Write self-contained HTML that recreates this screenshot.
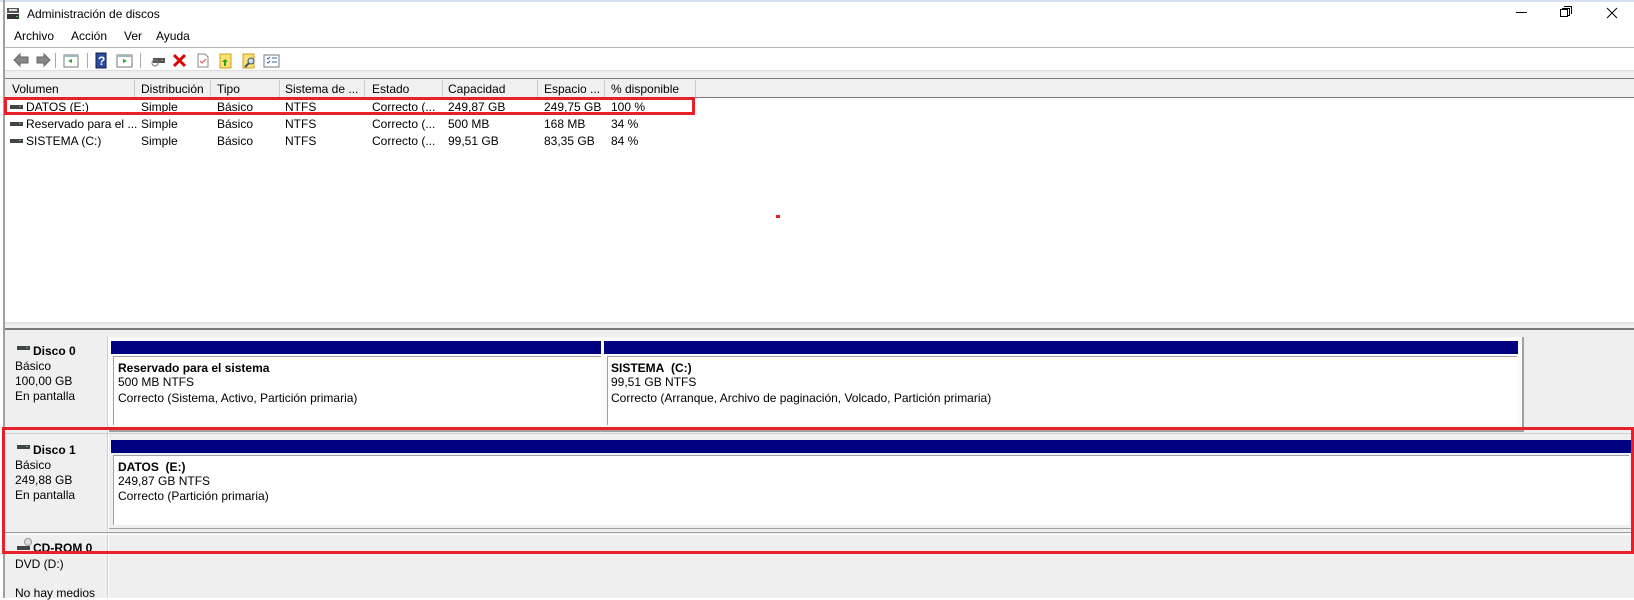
<!DOCTYPE html>
<html><head><meta charset="utf-8"><style>
*{margin:0;padding:0;box-sizing:border-box}
body{width:1634px;height:598px;overflow:hidden;background:#fff;position:relative;font-family:"Liberation Sans",sans-serif;font-size:12px;color:#000}
.a{position:absolute;white-space:nowrap}
.t{line-height:14px}
b{font-weight:bold}
</style></head><body>
<div class="a" style="left:0;top:0;width:1634px;height:2px;background:#d6e0f2"></div>
<div class="a" style="left:3px;top:0;width:2px;height:598px;background:#a0a0a0"></div>
<!-- title -->
<svg class="a" style="left:7px;top:8px" width="12" height="12"><rect x="0" y="0" width="12" height="5" fill="#555"/><rect x="2" y="1" width="8" height="2" fill="#ddd"/><rect x="0" y="6" width="12" height="5" fill="#333"/><rect x="9" y="8" width="2" height="1" fill="#4c4"/></svg>
<div class="a t" style="left:27px;top:7px">Administración de discos</div>
<div class="a" style="left:1516px;top:12px;width:11px;height:1px;background:#000"></div>
<div class="a" style="left:1562px;top:8px;width:8px;height:8px;border:1px solid #000;background:#fff"></div>
<div class="a" style="left:1564px;top:6px;width:8px;height:8px;border-top:1px solid #000;border-right:1px solid #000"></div>
<div class="a" style="left:1560px;top:9px;width:8px;height:8px;border:1px solid #000;background:#fff"></div>
<svg class="a" style="left:1606px;top:7px" width="12" height="12"><path d="M1 1L11 11M11 1L1 11" stroke="#000" stroke-width="1"/></svg>
<!-- menu -->
<div class="a t" style="left:14px;top:29px">Archivo</div>
<div class="a t" style="left:71px;top:29px">Acción</div>
<div class="a t" style="left:124px;top:29px">Ver</div>
<div class="a t" style="left:156px;top:29px">Ayuda</div>
<div class="a" style="left:5px;top:47px;width:1629px;height:1px;background:#b4b4b4"></div>
<!-- toolbar -->
<svg class="a" style="left:5px;top:50px" width="290" height="20">
<path d="M9 10L15 4V7H23V13H15V16Z" fill="#888" stroke="#666"/>
<path d="M45 10L39 4V7H32V13H39V16Z" fill="#888" stroke="#666"/>
<rect x="50" y="3" width="1" height="15" fill="#aaa"/>
<rect x="59" y="5" width="14" height="12" fill="#fff" stroke="#777"/><rect x="59" y="5" width="14" height="2" fill="#9bb"/><path d="M67 9L63 11L67 13Z" fill="#2a2"/>
<rect x="82" y="3" width="1" height="15" fill="#aaa"/>
<rect x="91" y="3" width="10" height="15" fill="#2a4aa8" stroke="#123"/><text x="93" y="15" fill="#fff" font-size="12" font-weight="bold">?</text>
<rect x="112" y="5" width="15" height="12" fill="#fff" stroke="#777"/><rect x="112" y="5" width="15" height="2" fill="#9bb"/><path d="M118 9L122 11L118 13Z" fill="#2a2"/>
<rect x="135" y="3" width="1" height="15" fill="#aaa"/>
<rect x="148" y="8" width="12" height="5" fill="#555"/><circle cx="150" cy="13" r="3" fill="none" stroke="#777"/><rect x="156" y="10" width="2" height="1" fill="#4c4"/>
<path d="M169 5L180 16M180 5L169 16" stroke="#d00" stroke-width="3"/>
<path d="M193 4H200L203 7V17H193Z" fill="#fff" stroke="#888"/><path d="M195 11L197 13L201 9" stroke="#e44" fill="none"/>
<rect x="215" y="4" width="11" height="14" fill="#ffe070" stroke="#c9a020"/><path d="M220 9L223 12H221V16H219V12H217Z" fill="#2a2"/>
<rect x="238" y="4" width="11" height="14" fill="#ffe070" stroke="#c9a020"/><circle cx="246" cy="11" r="3" fill="#cde" stroke="#456"/><path d="M244 13L240 17" stroke="#456" stroke-width="2"/>
<rect x="259" y="5" width="15" height="12" fill="#fff" stroke="#778"/><path d="M262 8L263 9L265 7M262 12L263 13L265 11M267 8H272M267 12H272" stroke="#36a" fill="none"/>
</svg>
<div class="a" style="left:5px;top:70px;width:1629px;height:1px;background:#dcdcdc"></div>
<div class="a" style="left:5px;top:71px;width:1629px;height:7px;background:#f0f0f0"></div>
<!-- header -->
<div class="a" style="left:5px;top:78px;width:1629px;height:20px;background:#f0f0f0;border-top:1px solid #7a7a7a;border-bottom:1px solid #7a7a7a"></div>
<div class="a" style="left:134px;top:80px;width:1px;height:17px;background:#ccc"></div>
<div class="a" style="left:210px;top:80px;width:1px;height:17px;background:#ccc"></div>
<div class="a" style="left:279px;top:80px;width:1px;height:17px;background:#ccc"></div>
<div class="a" style="left:364px;top:80px;width:1px;height:17px;background:#ccc"></div>
<div class="a" style="left:442px;top:80px;width:1px;height:17px;background:#ccc"></div>
<div class="a" style="left:537px;top:80px;width:1px;height:17px;background:#ccc"></div>
<div class="a" style="left:604px;top:80px;width:1px;height:17px;background:#ccc"></div>
<div class="a" style="left:695px;top:80px;width:1px;height:17px;background:#ccc"></div>
<div class="a t" style="left:12px;top:82px">Volumen</div>
<div class="a t" style="left:141px;top:82px">Distribución</div>
<div class="a t" style="left:217px;top:82px">Tipo</div>
<div class="a t" style="left:285px;top:82px">Sistema de ...</div>
<div class="a t" style="left:372px;top:82px">Estado</div>
<div class="a t" style="left:448px;top:82px">Capacidad</div>
<div class="a t" style="left:544px;top:82px">Espacio ...</div>
<div class="a t" style="left:611px;top:82px">% disponible</div>
<!-- rows -->
<div class="a" style="left:10px;top:105px;width:13px;height:4px;background:#444"></div><div class="a" style="left:19px;top:106px;width:2px;height:1px;background:#4c4"></div>
<div class="a" style="left:10px;top:122px;width:13px;height:4px;background:#444"></div><div class="a" style="left:19px;top:123px;width:2px;height:1px;background:#4c4"></div>
<div class="a" style="left:10px;top:139px;width:13px;height:4px;background:#444"></div><div class="a" style="left:19px;top:140px;width:2px;height:1px;background:#4c4"></div>
<div class="a t" style="left:26px;top:100px">DATOS (E:)</div>
<div class="a t" style="left:26px;top:117px">Reservado para el ...</div>
<div class="a t" style="left:26px;top:134px">SISTEMA (C:)</div>
<div class="a t" style="left:141px;top:100px">Simple</div><div class="a t" style="left:141px;top:117px">Simple</div><div class="a t" style="left:141px;top:134px">Simple</div>
<div class="a t" style="left:217px;top:100px">Básico</div><div class="a t" style="left:217px;top:117px">Básico</div><div class="a t" style="left:217px;top:134px">Básico</div>
<div class="a t" style="left:285px;top:100px">NTFS</div><div class="a t" style="left:285px;top:117px">NTFS</div><div class="a t" style="left:285px;top:134px">NTFS</div>
<div class="a t" style="left:372px;top:100px">Correcto (...</div><div class="a t" style="left:372px;top:117px">Correcto (...</div><div class="a t" style="left:372px;top:134px">Correcto (...</div>
<div class="a t" style="left:448px;top:100px">249,87 GB</div><div class="a t" style="left:448px;top:117px">500 MB</div><div class="a t" style="left:448px;top:134px">99,51 GB</div>
<div class="a t" style="left:544px;top:100px">249,75 GB</div><div class="a t" style="left:544px;top:117px">168 MB</div><div class="a t" style="left:544px;top:134px">83,35 GB</div>
<div class="a t" style="left:611px;top:100px">100 %</div><div class="a t" style="left:611px;top:117px">34 %</div><div class="a t" style="left:611px;top:134px">84 %</div>
<div class="a" style="left:4px;top:97px;width:691px;height:18px;border:3px solid #e8202a"></div>
<div class="a" style="left:776px;top:215px;width:4px;height:3px;background:#e8202a"></div>
<!-- lower pane -->
<div class="a" style="left:5px;top:322px;width:1629px;height:276px;background:#efefef"></div>
<div class="a" style="left:5px;top:322px;width:1629px;height:2px;background:#e3e3e3"></div>
<div class="a" style="left:5px;top:328px;width:1629px;height:2px;background:#7a7a7a"></div>
<div class="a" style="left:108px;top:336px;width:1px;height:262px;background:#fff"></div>
<div class="a" style="left:107px;top:336px;width:1px;height:262px;background:#cfcfcf"></div>
<!-- disk 0 -->
<div class="a" style="left:17px;top:346px;width:13px;height:4px;background:#444"></div><div class="a" style="left:26px;top:347px;width:2px;height:1px;background:#4c4"></div>
<div class="a t" style="left:33px;top:344px"><b>Disco 0</b></div>
<div class="a t" style="left:15px;top:359px">Básico</div>
<div class="a t" style="left:15px;top:374px">100,00 GB</div>
<div class="a t" style="left:15px;top:389px">En pantalla</div>
<div class="a" style="left:109px;top:337px;width:1415px;height:95px;border-right:2px solid #a0a0a0;border-bottom:2px solid #a0a0a0;background:#fafafa"></div>
<div class="a" style="left:111px;top:341px;width:490px;height:13px;background:#000080"></div>
<div class="a" style="left:604px;top:341px;width:914px;height:13px;background:#000080"></div>
<div class="a" style="left:113px;top:356px;width:488px;height:69px;background:#fff;border-left:1px solid #a0a0a0;border-top:1px solid #a0a0a0"></div>
<div class="a" style="left:607px;top:356px;width:910px;height:69px;background:#fff;border-left:1px solid #a0a0a0;border-top:1px solid #a0a0a0"></div>
<div class="a t" style="left:118px;top:361px"><b>Reservado para el sistema</b></div>
<div class="a t" style="left:118px;top:375px">500 MB NTFS</div>
<div class="a t" style="left:118px;top:391px">Correcto (Sistema, Activo, Partición primaria)</div>
<div class="a t" style="left:611px;top:361px"><b>SISTEMA&nbsp; (C:)</b></div>
<div class="a t" style="left:611px;top:375px">99,51 GB NTFS</div>
<div class="a t" style="left:611px;top:391px">Correcto (Arranque, Archivo de paginación, Volcado, Partición primaria)</div>
<!-- disk 1 -->
<div class="a" style="left:5px;top:433px;width:1629px;height:1px;background:#cfcfcf"></div>
<div class="a" style="left:17px;top:445px;width:13px;height:4px;background:#444"></div><div class="a" style="left:26px;top:446px;width:2px;height:1px;background:#4c4"></div>
<div class="a t" style="left:33px;top:443px"><b>Disco 1</b></div>
<div class="a t" style="left:15px;top:458px">Básico</div>
<div class="a t" style="left:15px;top:473px">249,88 GB</div>
<div class="a t" style="left:15px;top:488px">En pantalla</div>
<div class="a" style="left:111px;top:440px;width:1520px;height:13px;background:#000080"></div>
<div class="a" style="left:113px;top:455px;width:1516px;height:70px;background:#fff;border-left:1px solid #a0a0a0;border-top:1px solid #a0a0a0"></div>
<div class="a" style="left:109px;top:528px;width:1525px;height:1px;background:#a0a0a0"></div>
<div class="a t" style="left:118px;top:460px"><b>DATOS&nbsp; (E:)</b></div>
<div class="a t" style="left:118px;top:474px">249,87 GB NTFS</div>
<div class="a t" style="left:118px;top:489px">Correcto (Partición primaria)</div>
<!-- cd-rom -->
<div class="a" style="left:5px;top:532px;width:1629px;height:1px;background:#a0a0a0"></div>
<div class="a" style="left:5px;top:534px;width:1629px;height:1px;background:#fff"></div>
<div class="a" style="left:24px;top:538px;width:8px;height:8px;border-radius:50%;border:1px solid #999;background:#ddd"></div>
<div class="a" style="left:17px;top:546px;width:13px;height:4px;background:#444"></div>
<div class="a t" style="left:33px;top:541px"><b>CD-ROM 0</b></div>
<div class="a t" style="left:15px;top:557px">DVD (D:)</div>
<div class="a t" style="left:15px;top:586px">No hay medios</div>
<div class="a" style="left:2px;top:427px;width:1632px;height:127px;border:3px solid #e8202a"></div>
</body></html>
